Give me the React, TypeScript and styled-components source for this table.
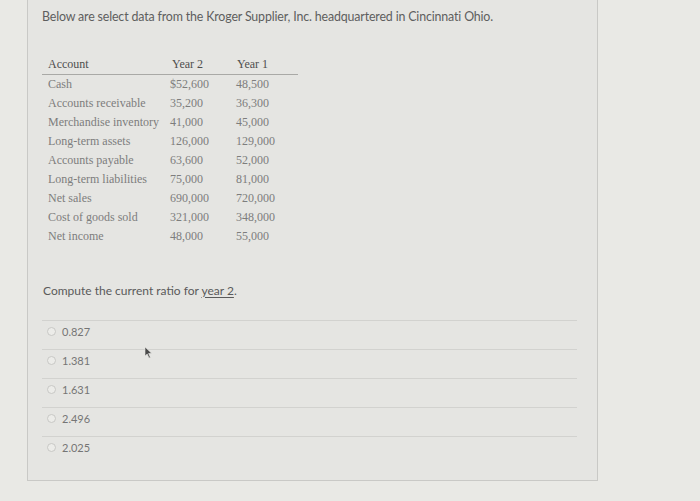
import styled, { createGlobalStyle } from 'styled-components';

type Row = { account: string; year2: string; year1: string };

const rows: Row[] = [
  { account: 'Cash', year2: '$52,600', year1: '48,500' },
  { account: 'Accounts receivable', year2: '35,200', year1: '36,300' },
  { account: 'Merchandise inventory', year2: '41,000', year1: '45,000' },
  { account: 'Long-term assets', year2: '126,000', year1: '129,000' },
  { account: 'Accounts payable', year2: '63,600', year1: '52,000' },
  { account: 'Long-term liabilities', year2: '75,000', year1: '81,000' },
  { account: 'Net sales', year2: '690,000', year1: '720,000' },
  { account: 'Cost of goods sold', year2: '321,000', year1: '348,000' },
  { account: 'Net income', year2: '48,000', year1: '55,000' },
];

const choices = ['0.827', '1.381', '1.631', '2.496', '2.025'];

const GlobalStyle = createGlobalStyle`
  html, body {
    margin: 0;
    padding: 0;
    background: #e9e9e5;
  }
`;

const Page = styled.div`
  position: relative;
  width: 700px;
  height: 501px;
  overflow: hidden;
  font-family: Lato, 'Open Sans', sans-serif;
`;

const Panel = styled.div`
  margin-left: 27px;
  width: 571px;
  box-sizing: border-box;
  padding: 9px 20px 15px 14px;
  background: #e5e5e2;
  border: 1px solid #c9c9c6;
  border-top: none;
`;

const Intro = styled.p`
  margin: 0;
  font-size: 12.4px;
  line-height: 16px;
  color: #5e5e5e;
  letter-spacing: -0.15px;
`;

const DataTable = styled.table`
  margin-top: 30px;
  border-collapse: collapse;
  font-family: 'Liberation Serif', 'Times New Roman', serif;
  font-size: 12px;
  color: #7d7d7d;
`;

const HeadCell = styled.th<{ $w: number; $pl?: number }>`
  width: ${({ $w }) => $w}px;
  box-sizing: border-box;
  padding: 0 0 0 ${({ $pl }) => $pl ?? 6}px;
  height: 19px;
  text-align: left;
  font-weight: normal;
  color: #4e4e4e;
  border-bottom: 1px solid #a9a9a6;
`;

const Cell = styled.td<{ $pl?: number }>`
  padding: 0 0 0 ${({ $pl }) => $pl ?? 6}px;
  height: 19px;
  white-space: nowrap;
`;

const Question = styled.p`
  margin: 37px 0 21px 1px;
  font-size: 12px;
  line-height: 16px;
  color: #5a5a5a;
`;

const Underlined = styled.span`
  text-decoration: underline;
  text-underline-offset: 2px;
`;

const Choice = styled.label`
  display: flex;
  align-items: flex-start;
  height: 29px;
  box-sizing: border-box;
  padding: 4px 0 0 5px;
  border-top: 1px solid #d2d2cf;
  font-size: 11px;
  line-height: 14px;
  color: #757575;
`;

const Radio = styled.span`
  width: 9px;
  height: 9px;
  margin: 2px 6px 0 0;
  border-radius: 50%;
  border: 1px solid #c8c8c5;
  background: #ecece9;
  box-sizing: border-box;
`;

const Cursor = styled.svg`
  position: absolute;
  left: 144px;
  top: 346px;
`;

export default function App() {
  return (
    <Page>
      <GlobalStyle />
      <Panel>
        <Intro>
          Below are select data from the Kroger Supplier, Inc. headquartered in Cincinnati Ohio.
        </Intro>
        <DataTable>
          <thead>
            <tr>
              <HeadCell $w={122}>Account</HeadCell>
              <HeadCell $w={66} $pl={8}>Year 2</HeadCell>
              <HeadCell $w={68} $pl={7}>Year 1</HeadCell>
            </tr>
          </thead>
          <tbody>
            {rows.map((r) => (
              <tr key={r.account}>
                <Cell>{r.account}</Cell>
                <Cell $pl={6}>{r.year2}</Cell>
                <Cell $pl={6}>{r.year1}</Cell>
              </tr>
            ))}
          </tbody>
        </DataTable>
        <Question>
          Compute the current ratio for <Underlined>year 2</Underlined>.
        </Question>
        {choices.map((c) => (
          <Choice key={c}>
            <Radio />
            {c}
          </Choice>
        ))}
      </Panel>
      <Cursor width="9" height="13" viewBox="0 0 9 13">
        <path d="M1 1 L1 10 L3.2 8 L5 12 L6.4 11.4 L4.6 7.5 L7.6 7.3 Z" fill="#4a4a4a" stroke="#e5e5e2" strokeWidth="0.6" />
      </Cursor>
    </Page>
  );
}
